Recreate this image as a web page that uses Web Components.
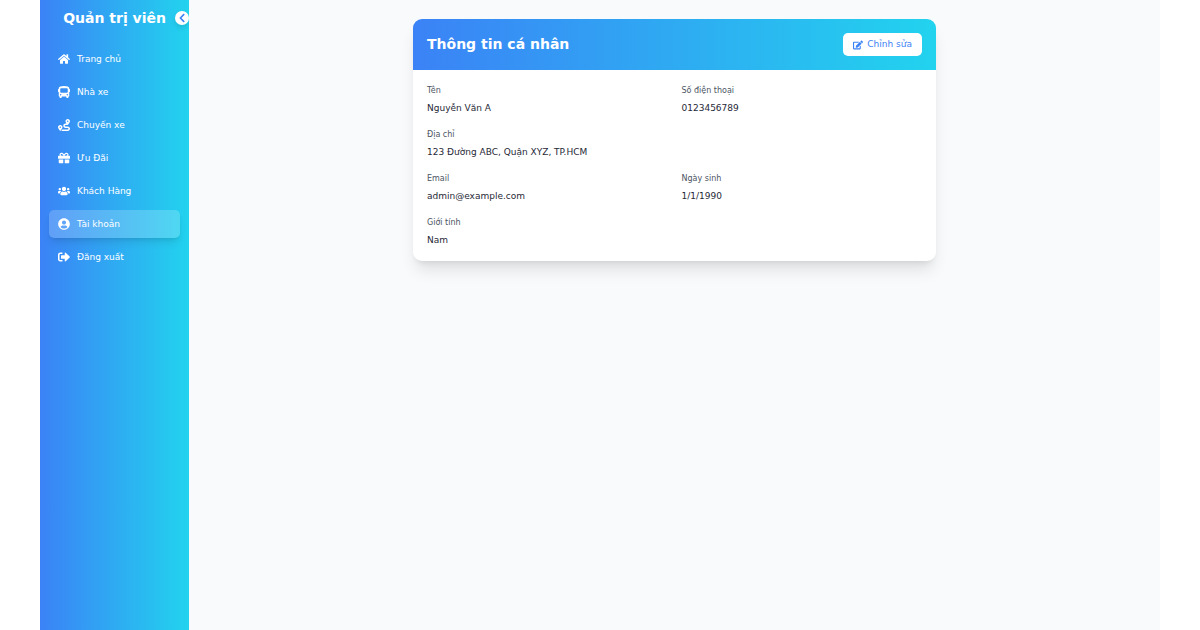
<!DOCTYPE html>
<html lang="vi">
<head>
<meta charset="utf-8">
<meta name="viewport" content="width=device-width, initial-scale=1">
<title>Thông tin cá nhân</title>
<style>
    body {
        margin: 0;
        background: #fff;
        font-family: "DejaVu Sans", sans-serif;
        font-size: 9px;
        line-height: 14px;
        color: #1f2937;
    }
</style>
</head>
<body>
<admin-layout>
    <side-bar slot="sidebar" heading="Quản trị viên">
        <nav-item icon="home" href="#home">Trang chủ</nav-item>
        <nav-item icon="bus" href="#operators">Nhà xe</nav-item>
        <nav-item icon="route" href="#trips">Chuyến xe</nav-item>
        <nav-item icon="gift" href="#offers">Ưu Đãi</nav-item>
        <nav-item icon="users" href="#customers">Khách Hàng</nav-item>
        <nav-item icon="account" href="#account" active>Tài khoản</nav-item>
        <nav-item icon="logout" href="#logout">Đăng xuất</nav-item>
    </side-bar>
    <profile-card heading="Thông tin cá nhân">
        <profile-field label="Tên">Nguyễn Văn A</profile-field>
        <profile-field label="Số điện thoại">0123456789</profile-field>
        <profile-field label="Địa chỉ" wide>123 Đường ABC, Quận XYZ, TP.HCM</profile-field>
        <profile-field label="Email">admin@example.com</profile-field>
        <profile-field label="Ngày sinh">1/1/1990</profile-field>
        <profile-field label="Giới tính">Nam</profile-field>
    </profile-card>
</admin-layout>

<script>
(function () {
    const ICONS = {
        home: ["0 0 576 512", "M280.37 148.26L96 300.11V464a16 16 0 0 0 16 16l112.06-.29a16 16 0 0 0 15.92-16V368a16 16 0 0 1 16-16h64a16 16 0 0 1 16 16v95.64a16 16 0 0 0 16 16.05L464 480a16 16 0 0 0 16-16V300L295.67 148.26a12.19 12.19 0 0 0-15.3 0zM571.6 251.47L488 182.56V44.05a12 12 0 0 0-12-12h-56a12 12 0 0 0-12 12v72.61L318.47 43a48 48 0 0 0-61 0L4.34 251.47a12 12 0 0 0-1.6 16.9l25.5 31A12 12 0 0 0 45.15 301l235.22-193.74a12.19 12.19 0 0 1 15.3 0L530.9 301a12 12 0 0 0 16.9-1.6l25.5-31a12 12 0 0 0-1.7-16.93z"],
        bus: ["0 0 512 512", "M488 128h-8V80c0-44.8-99.2-80-224-80S32 35.2 32 80v48h-8c-13.25 0-24 10.74-24 24v80c0 13.25 10.75 24 24 24h8v160c0 17.67 14.33 32 32 32v32c0 17.67 14.33 32 32 32h32c17.67 0 32-14.33 32-32v-32h192v32c0 17.67 14.33 32 32 32h32c17.67 0 32-14.33 32-32v-32h6.4c16 0 25.6-12.8 25.6-25.6V256h8c13.25 0 24-10.75 24-24v-80c0-13.26-10.75-24-24-24zM112 400c-17.67 0-32-14.33-32-32s14.33-32 32-32 32 14.33 32 32-14.33 32-32 32zm16-112c-17.67 0-32-14.33-32-32V128c0-17.67 14.33-32 32-32h256c17.67 0 32 14.33 32 32v128c0 17.67-14.33 32-32 32H128zm272 112c-17.67 0-32-14.33-32-32s14.33-32 32-32 32 14.33 32 32-14.33 32-32 32z"],
        route: ["0 0 512 512", "M416 320h-96c-17.6 0-32-14.4-32-32s14.4-32 32-32h96s96-107 96-160-43-96-96-96-96 43-96 96c0 25.5 22.2 63.4 45.3 96H320c-52.9 0-96 43.1-96 96s43.1 96 96 96h96c17.6 0 32 14.4 32 32s-14.4 32-32 32H185.5c-16 24.8-33.8 47.7-47.3 64H416c52.9 0 96-43.1 96-96s-43.1-96-96-96zm0-256c17.7 0 32 14.3 32 32s-14.3 32-32 32-32-14.3-32-32 14.3-32 32-32zM96 256c-53 0-96 43-96 96s96 160 96 160 96-107 96-160-43-96-96-96zm0 128c-17.7 0-32-14.3-32-32s14.3-32 32-32 32 14.3 32 32-14.3 32-32 32z"],
        gift: ["0 0 512 512", "M32 448c0 17.7 14.3 32 32 32h160V320H32v128zm256 32h160c17.7 0 32-14.3 32-32V320H288v160zm192-320h-42.1c6.2-12.1 10.1-25.5 10.1-40 0-48.5-39.5-88-88-88-41.6 0-68.5 21.3-103 68.3-34.5-47-61.4-68.3-103-68.3-48.5 0-88 39.5-88 88 0 14.5 3.8 27.9 10.1 40H32c-17.7 0-32 14.3-32 32v80c0 8.8 7.2 16 16 16h480c8.8 0 16-7.2 16-16v-80c0-17.7-14.3-32-32-32zm-326.1 0c-22.1 0-40-17.9-40-40s17.9-40 40-40c19.9 0 34.6 3.3 86.1 80h-86.1zm206.1 0h-86.1c51.4-76.5 65.7-80 86.1-80 22.1 0 40 17.9 40 40s-17.9 40-40 40z"],
        users: ["0 0 640 512", "M96 224c35.3 0 64-28.7 64-64s-28.7-64-64-64-64 28.7-64 64 28.7 64 64 64zm448 0c35.3 0 64-28.7 64-64s-28.7-64-64-64-64 28.7-64 64 28.7 64 64 64zm32 32h-64c-17.6 0-33.5 7.1-45.1 18.6 40.3 22.1 68.9 62 75.1 109.4h66c17.7 0 32-14.3 32-32v-32c0-35.3-28.7-64-64-64zm-256 0c61.9 0 112-50.1 112-112S381.9 32 320 32 208 82.1 208 144s50.1 112 112 112zm76.8 32h-8.3c-20.8 10-43.9 16-68.5 16s-47.6-6-68.5-16h-8.3C179.6 288 128 339.6 128 403.2V432c0 26.5 21.5 48 48 48h288c26.5 0 48-21.5 48-48v-28.8c0-63.6-51.6-115.2-115.2-115.2zm-223.7-13.4C161.5 263.1 145.6 256 128 256H64c-35.3 0-64 28.7-64 64v32c0 17.7 14.3 32 32 32h65.9c6.3-47.4 34.9-87.3 75.2-109.4z"],
        account: ["0 0 496 512", "M248 8C111 8 0 119 0 256s111 248 248 248 248-111 248-248S385 8 248 8zm0 96c48.6 0 88 39.4 88 88s-39.4 88-88 88-88-39.4-88-88 39.4-88 88-88zm0 344c-58.7 0-111.3-26.6-146.5-68.2 18.8-35.4 55.6-59.8 98.5-59.8 2.4 0 4.8.4 7.1 1.1 13 4.2 26.6 6.9 40.9 6.9 14.3 0 28-2.7 40.9-6.9 2.3-.7 4.7-1.1 7.1-1.1 42.9 0 79.7 24.4 98.5 59.8C359.3 421.4 306.7 448 248 448z"],
        logout: ["0 0 512 512", "M497 273L329 441c-15 15-41 4.5-41-17v-96H152c-13.3 0-24-10.7-24-24v-96c0-13.3 10.7-24 24-24h136V88c0-21.4 25.9-32 41-17l168 168c9.3 9.4 9.3 24.6 0 34zM192 436v-40c0-6.6-5.4-12-12-12H96c-17.7 0-32-14.3-32-32V160c0-17.7 14.3-32 32-32h84c6.6 0 12-5.4 12-12V76c0-6.6-5.4-12-12-12H96c-53 0-96 43-96 96v192c0 53 43 96 96 96h84c6.6 0 12-5.4 12-12z"],
        edit: ["0 0 576 512", "M402.6 83.2l90.2 90.2c3.8 3.8 3.8 10 0 13.8L274.4 405.6l-92.8 10.3c-12.4 1.4-22.9-9.1-21.5-21.5l10.3-92.8L388.8 83.2c3.8-3.8 10-3.8 13.8 0zm162-22.9l-48.8-48.8c-15.2-15.2-39.9-15.2-55.2 0l-35.4 35.4c-3.8 3.8-3.8 10 0 13.8l90.2 90.2c3.8 3.8 10 3.8 13.8 0l35.4-35.4c15.2-15.3 15.2-40 0-55.2zM384 346.2V448H64V128h229.8c3.2 0 6.2-1.3 8.5-3.5l40-40c7.6-7.6 2-20.5-8.5-20.5H48C21.5 64 0 85.5 0 112v352c0 26.5 21.5 48 48 48h352c26.5 0 48-21.5 48-48V306.2c0-10.7-12.9-16-20.5-8.5l-40 40c-2.2 2.3-3.5 5.3-3.5 8.5z"],
        chevron: ["0 0 320 512", "M34.52 239.03L228.87 44.69c9.37-9.37 24.57-9.37 33.94 0l22.67 22.67c9.36 9.36 9.37 24.52.04 33.9L131.49 256l154.02 154.75c9.34 9.38 9.32 24.54-.04 33.9l-22.67 22.67c-9.37 9.37-24.57 9.37-33.94 0L34.52 272.97c-9.37-9.37-9.37-24.57 0-33.94z"]
    };

    class AdminLayout extends HTMLElement {
        constructor() {
            super();
            this.attachShadow({ mode: "open" }).innerHTML = `
              <style>
                  :host {
                      display: flex;
                      min-height: 100vh;
                      margin: 0 40px;
                  }
                  main {
                      flex: 1;
                      padding: 19px;
                      background: #f9fafb;
                  }
              </style>
              <slot name="sidebar"></slot>
              <main><slot></slot></main>
            `;
        }
    }
    customElements.define("admin-layout", AdminLayout);

    class UiIcon extends HTMLElement {
        constructor() {
            super();
            this.attachShadow({ mode: "open" });
        }
        connectedCallback() {
            const [box, path] = ICONS[this.getAttribute("name")];
            this.shadowRoot.innerHTML = `
              <style>
                  :host {
                      display: block;
                      flex: none;
                      width: var(--icon-size, 12px);
                      height: var(--icon-size, 12px);
                  }
                  svg {
                      display: block;
                      width: 100%;
                      height: 100%;
                  }
              </style>
              <svg viewBox="${box}" fill="currentColor" aria-hidden="true"><path d="${path}"/></svg>
            `;
        }
    }
    customElements.define("ui-icon", UiIcon);

    class SideBar extends HTMLElement {
        constructor() {
            super();
            this.attachShadow({ mode: "open" });
        }
        connectedCallback() {
            this.shadowRoot.innerHTML = `
              <style>
                  :host {
                      flex: none;
                      width: 149px;
                      color: #fff;
                      background: linear-gradient(to right, #3b82f6, #22d3ee);
                  }
                  header {
                      display: flex;
                      align-items: center;
                      justify-content: flex-end;
                      gap: 9px;
                      height: 36px;
                  }
                  h2 {
                      margin: 0;
                      font-size: 14px;
                      line-height: 18px;
                      white-space: nowrap;
                  }
                  button {
                      display: flex;
                      align-items: center;
                      justify-content: center;
                      width: 14px;
                      height: 14px;
                      padding: 0;
                      border: 0;
                      border-radius: 50%;
                      color: #3b82f6;
                      background: #fff;
                      box-shadow: 0 3px 5px rgba(0, 0, 0, .1);
                      cursor: pointer;
                      --icon-size: 10px;
                  }
                  nav {
                      display: flex;
                      flex-direction: column;
                      gap: 5px;
                      padding: 9px;
                  }
              </style>
              <header>
                <h2>${this.getAttribute("heading")}</h2>
                <button type="button" aria-label="Thu gọn"><ui-icon name="chevron"></ui-icon></button>
              </header>
              <nav><slot></slot></nav>
            `;
        }
    }
    customElements.define("side-bar", SideBar);

    class NavItem extends HTMLElement {
        constructor() {
            super();
            this.attachShadow({ mode: "open" });
        }
        connectedCallback() {
            this.shadowRoot.innerHTML = `
              <style>
                  :host {
                      display: block;
                  }
                  a {
                      display: flex;
                      align-items: center;
                      gap: 7px;
                      padding: 7px 9px;
                      border-radius: 5px;
                      color: inherit;
                      text-decoration: none;
                  }
                  :host([active]) a {
                      background: rgba(255, 255, 255, .2);
                      box-shadow: 0 6px 9px -2px rgba(0, 0, 0, .1), 0 2px 4px -2px rgba(0, 0, 0, .1);
                  }
              </style>
              <a href="${this.getAttribute("href")}">
                <ui-icon name="${this.getAttribute("icon")}"></ui-icon>
                <span><slot></slot></span>
              </a>
            `;
        }
    }
    customElements.define("nav-item", NavItem);

    class ProfileCard extends HTMLElement {
        constructor() {
            super();
            this.attachShadow({ mode: "open" });
        }
        connectedCallback() {
            this.shadowRoot.innerHTML = `
              <style>
                  :host {
                      display: block;
                      max-width: 523px;
                      margin: 0 auto;
                      border-radius: 9px;
                      overflow: hidden;
                      background: #fff;
                      box-shadow: 0 12px 16px -3px rgba(0, 0, 0, .1), 0 5px 6px -4px rgba(0, 0, 0, .1);
                  }
                  header {
                      display: flex;
                      align-items: center;
                      justify-content: space-between;
                      padding: 14px;
                      color: #fff;
                      background: linear-gradient(to right, #3b82f6, #22d3ee);
                  }
                  h1 {
                      margin: 0;
                      font-size: 14px;
                      line-height: 17px;
                  }
                  button {
                      display: flex;
                      align-items: center;
                      gap: 4px;
                      padding: 5px 10px;
                      border: 0;
                      border-radius: 5px;
                      font: inherit;
                      line-height: 13px;
                      color: #3b82f6;
                      background: #fff;
                      cursor: pointer;
                      --icon-size: 10px;
                  }
                  .fields {
                      display: grid;
                      grid-template-columns: 1fr 1fr;
                      gap: 14px;
                      padding: 15px 14px 14px;
                  }
              </style>
              <header>
                <h1>${this.getAttribute("heading")}</h1>
                <button type="button"><ui-icon name="edit"></ui-icon>Chỉnh sửa</button>
              </header>
              <div class="fields"><slot></slot></div>
            `;
        }
    }
    customElements.define("profile-card", ProfileCard);

    class ProfileField extends HTMLElement {
        constructor() {
            super();
            this.attachShadow({ mode: "open" });
        }
        connectedCallback() {
            this.shadowRoot.innerHTML = `
              <style>
                  :host {
                      display: block;
                  }
                  :host([wide]) {
                      grid-column: 1 / -1;
                  }
                  dl, dd {
                      margin: 0;
                  }
                  dt {
                      margin-bottom: 4px;
                      font-size: 8px;
                      line-height: 12px;
                      color: #4b5563;
                  }
              </style>
              <dl>
                <dt>${this.getAttribute("label")}</dt>
                <dd><slot></slot></dd>
              </dl>
            `;
        }
    }
    customElements.define("profile-field", ProfileField);
})();
</script>
</body>
</html>
